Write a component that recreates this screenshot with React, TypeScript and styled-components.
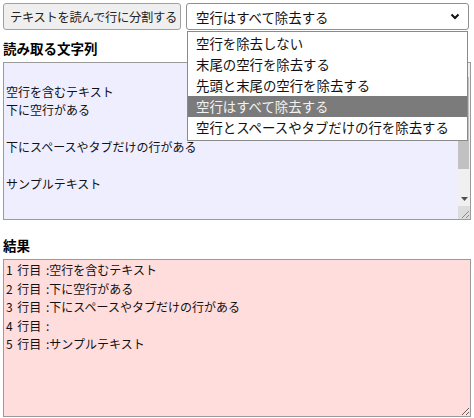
import React from "react";
import styled, { createGlobalStyle } from "styled-components";

const Global = createGlobalStyle`
  html, body { margin: 0; padding: 0; background: #fff; }
  body { font-family: "Noto Sans CJK JP", "Noto Sans", sans-serif; color: #000; }
`;

const Page = styled.div`
  padding: 3px 3px 3px 3px;
  width: 474px;
  box-sizing: border-box;
`;

const Toolbar = styled.div`
  display: flex;
  align-items: center;
  gap: 5px;
  height: 27px;
`;

const Button = styled.button`
  height: 27px;
  width: 178px;
  padding: 0 6px;
  box-sizing: border-box;
  background: #efefef;
  border: 1px solid #a0a0a0;
  border-radius: 3px;
  font-family: "Noto Sans CJK JP", sans-serif;
  font-size: 12.3px;
  color: #222;
  letter-spacing: -0.3px;
  white-space: nowrap;
`;

const SelectWrap = styled.div`
  position: relative;
  width: 283px;
  height: 27px;
`;

const SelectBox = styled.div`
  height: 27px;
  box-sizing: border-box;
  border: 1px solid #8f8f8f;
  border-radius: 3px;
  background: #fff;
  display: flex;
  align-items: center;
  justify-content: space-between;
  padding: 0 8px 0 9px;
  font-size: 13.4px;
  color: #111;
`;

const List = styled.ul`
  position: absolute;
  left: 1px;
  top: 28px;
  width: 281px;
  margin: 0;
  padding: 1px 0 2px;
  list-style: none;
  box-sizing: border-box;
  background: #fff;
  border: 1px solid #8a8a8a;
  z-index: 10;
`;

const Option = styled.li<{ $active?: boolean }>`
  height: 21px;
  line-height: 21px;
  padding-left: 8px;
  font-size: 13.4px;
  white-space: nowrap;
  background: ${(p) => (p.$active ? "#7b7b7b" : "transparent")};
  color: ${(p) => (p.$active ? "#f2f2f2" : "#111")};
`;

const Label = styled.h2`
  margin: 0;
  font-size: 13.5px;
  font-weight: 700;
  line-height: 20px;
`;

const AreaWrap = styled.div`
  position: relative;
  width: 468px;
  height: 158px;
`;

const Area = styled.textarea<{ $bg: string; $wordSpacing?: number }>`
  display: block;
  width: 468px;
  height: 158px;
  box-sizing: border-box;
  margin: 0;
  padding: 1px 2px;
  border: 1px solid #9a9a9a;
  background: ${(p) => p.$bg};
  font-family: "Noto Sans CJK JP", sans-serif;
  font-size: 12px;
  line-height: 18.5px;
  word-spacing: ${(p) => p.$wordSpacing ?? 0}px;
  color: #111;
  overflow: hidden;
  outline: none;
`;

const ScrollBar = styled.div`
  position: absolute;
  top: 1px;
  right: 1px;
  bottom: 14px;
  width: 12px;
  display: flex;
  flex-direction: column;
  background: #f0f0f0;
`;

const ArrowButton = styled.div`
  height: 14px;
  display: flex;
  align-items: center;
  justify-content: center;
  flex: none;
`;

const Track = styled.div`
  flex: 1;
  display: flex;
  flex-direction: column;
`;

const Thumb = styled.div`
  background: #c1c1c1;
  margin: 0 1px 0 0;
`;

const Corner = styled.div`
  position: absolute;
  right: 1px;
  bottom: 1px;
  width: 12px;
  height: 13px;
  background: #dcdcdc;
  display: flex;
  align-items: flex-end;
  justify-content: flex-end;
`;

const Section = styled.section<{ $top: number }>`
  margin-top: ${(p) => p.$top}px;
  display: flex;
  flex-direction: column;
  gap: 4px;
`;

const options = [
  "空行を除去しない",
  "末尾の空行を除去する",
  "先頭と末尾の空行を除去する",
  "空行はすべて除去する",
  "空行とスペースやタブだけの行を除去する",
];

const inputText =
  "\n空行を含むテキスト\n下に空行がある\n\n下にスペースやタブだけの行がある\n  \t\nサンプルテキスト\n\n\n";

const lines = ["空行を含むテキスト", "下に空行がある", "下にスペースやタブだけの行がある", "", "サンプルテキスト"];
const resultText = lines.map((l, i) => `${i + 1} 行目 :${l}`).join("\n");

const thumbRatio = 0.8;

export default function App() {
  return (
    <>
      <Global />
      <Page>
        <Toolbar>
          <Button>テキストを読んで行に分割する</Button>
          <SelectWrap>
            <SelectBox>
              <span>空行はすべて除去する</span>
              <svg width="10" height="7" viewBox="0 0 10 7">
                <polyline points="1.5,1.5 5,5 8.5,1.5" fill="none" stroke="#111" strokeWidth="2" />
              </svg>
            </SelectBox>
            <List>
              {options.map((o, i) => (
                <Option key={o} $active={i === 3}>
                  {o}
                </Option>
              ))}
            </List>
          </SelectWrap>
        </Toolbar>
        <Section $top={8}>
          <Label>読み取る文字列</Label>
          <AreaWrap>
            <Area $bg="#eeeeff" defaultValue={inputText} spellCheck={false} />
            <ScrollBar>
              <ArrowButton>
                <svg width="7" height="4" viewBox="0 0 7 4">
                  <polygon points="0,4 7,4 3.5,0" fill="#505050" />
                </svg>
              </ArrowButton>
              <Track>
                <Thumb style={{ height: `${thumbRatio * 100}%` }} />
              </Track>
              <ArrowButton>
                <svg width="7" height="4" viewBox="0 0 7 4">
                  <polygon points="0,0 7,0 3.5,4" fill="#505050" />
                </svg>
              </ArrowButton>
            </ScrollBar>
            <Corner>
              <svg width="10" height="10" viewBox="0 0 10 10">
                <line x1="9" y1="2" x2="2" y2="9" stroke="#8a8a8a" strokeWidth="1" />
                <line x1="9" y1="6" x2="6" y2="9" stroke="#8a8a8a" strokeWidth="1" />
              </svg>
            </Corner>
          </AreaWrap>
        </Section>
        <Section $top={15}>
          <Label>結果</Label>
          <Area $bg="#ffdddd" $wordSpacing={2} defaultValue={resultText} spellCheck={false} readOnly />
        </Section>
      </Page>
    </>
  );
}
